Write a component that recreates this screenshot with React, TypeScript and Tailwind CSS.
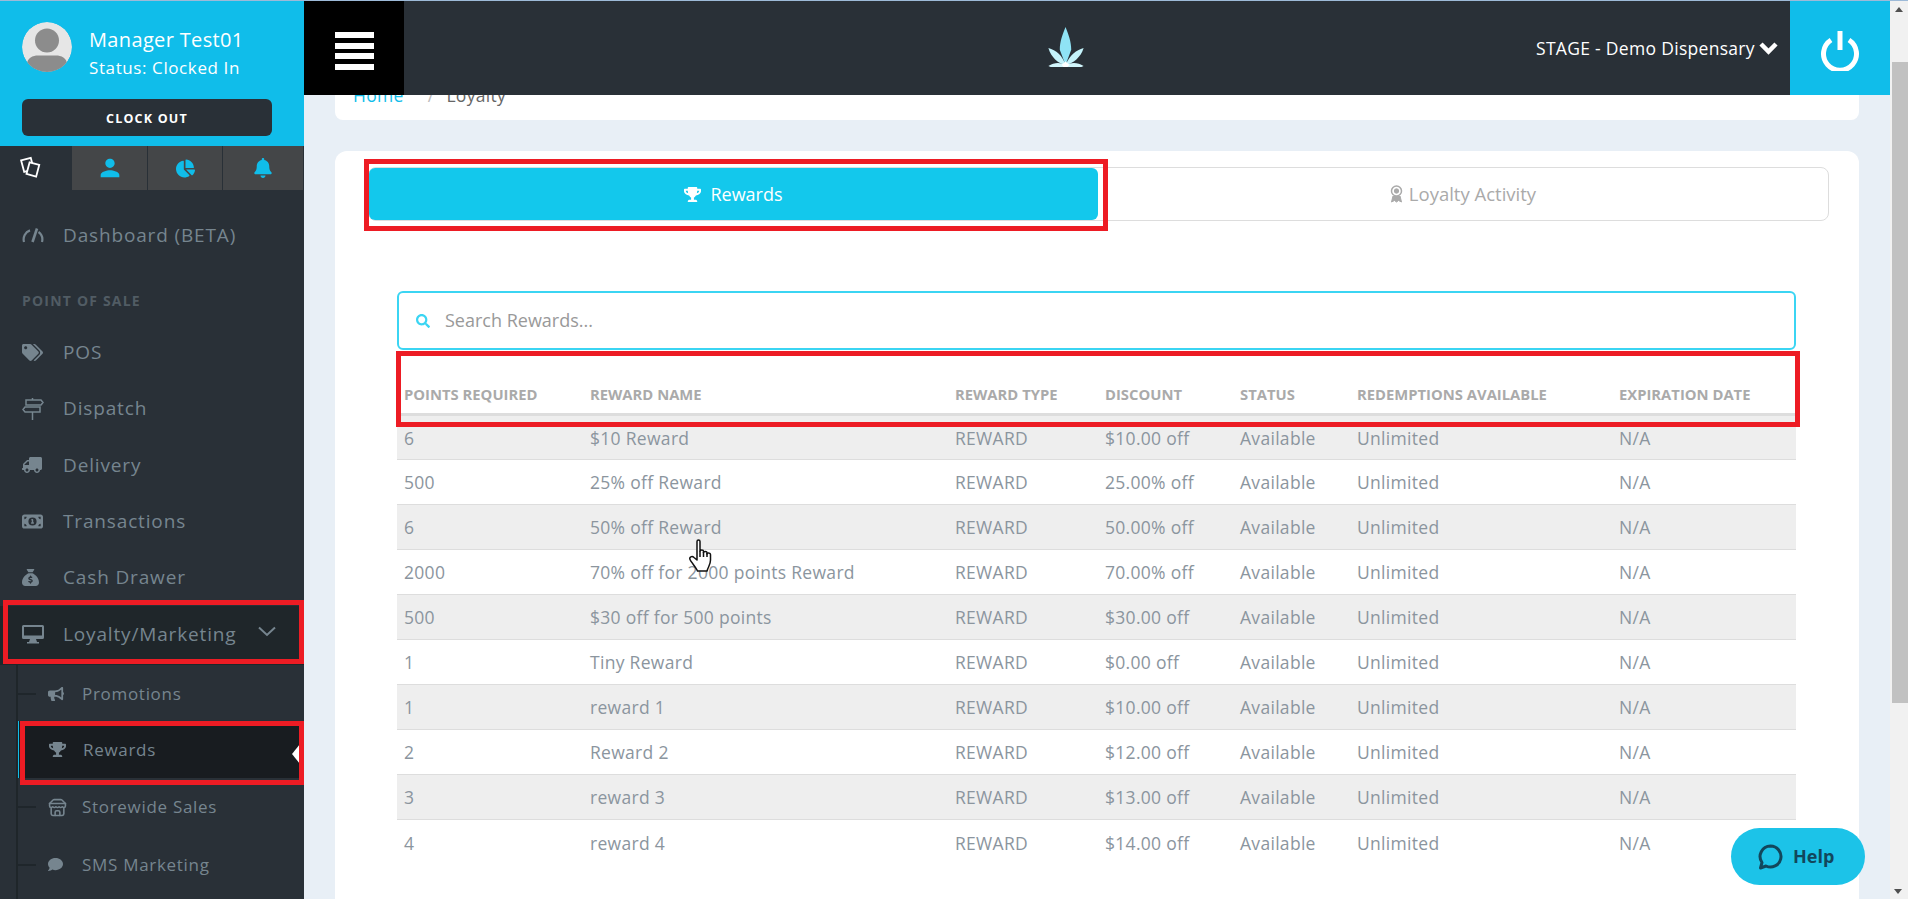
import { FaTags, FaTruck, FaBullhorn, FaTrophy, FaComment, FaChartPie, FaBell, FaSearch } from 'react-icons/fa';
import { LuStore } from 'react-icons/lu';
import { FaSackDollar, FaMoneyBill1 } from 'react-icons/fa6';
import { MdPerson } from 'react-icons/md';
import type { ReactNode } from 'react';

const rows = [
    ['6', '$10 Reward', '$10.00 off'],
    ['500', '25% off Reward', '25.00% off'],
    ['6', '50% off Reward', '50.00% off'],
    ['2000', '70% off for 2000 points Reward', '70.00% off'],
    ['500', '$30 off for 500 points', '$30.00 off'],
    ['1', 'Tiny Reward', '$0.00 off'],
    ['1', 'reward 1', '$10.00 off'],
    ['2', 'Reward 2', '$12.00 off'],
    ['3', 'reward 3', '$13.00 off'],
    ['4', 'reward 4', '$14.00 off'],
];

const heads = [
    { label: 'POINTS REQUIRED', w: 'w-[186px]' },
    { label: 'REWARD NAME', w: 'w-[365px]' },
    { label: 'REWARD TYPE', w: 'w-[150px]' },
    { label: 'DISCOUNT', w: 'w-[135px]' },
    { label: 'STATUS', w: 'w-[117px]' },
    { label: 'REDEMPTIONS AVAILABLE', w: 'w-[262px]' },
    { label: 'EXPIRATION DATE', w: 'w-[184px]' },
];

function NavItem({ icon, label }: { icon: ReactNode; label: string }) {
    return (
        <div className="flex h-[56.3px] items-center pl-[22px] text-[19px] tracking-[0.85px] text-[#76858f]">
            <span className="flex w-[41px] shrink-0 items-center text-[#76858f]">{icon}</span>
            {label}
        </div>
    );
}

function SubItem({ icon, label }: { icon: ReactNode; label: string }) {
    return (
        <div className="flex h-[57.5px] items-center text-[17px] tracking-[0.7px] text-[#76858f]">
            <span className="mr-[12px] h-[2px] w-[18px] shrink-0 bg-[#1f262b]" />
            <span className="flex w-[34px] shrink-0 items-center">{icon}</span>
            {label}
        </div>
    );
}

function Gauge() {
    return (
        <svg width="22" height="16" viewBox="0 0 22 16" fill="none" stroke="#76858f" strokeWidth="2.2">
            <path d="M2 15 A9.500 9.500 0 0 1 8 3.400" />
            <path d="M20 15 A9.500 9.500 0 0 0 16.500 5" />
            <path d="M10.500 15 L15 1.500" strokeWidth="2.6" />
        </svg>
    );
}

function Signpost() {
    return (
        <svg width="22" height="22" viewBox="0 0 22 22" fill="none" stroke="#76858f" strokeWidth="1.5">
            <path d="M4 2 H19 L21 4.500 L19 7 H4 Z" />
            <path d="M18 9 H3 L1 11.500 L3 14 H18 Z" />
            <path d="M10.500 14 V22" />
            <path d="M10.500 0 V2" />
        </svg>
    );
}

function Monitor() {
    return (
        <svg width="22" height="19" viewBox="0 0 22 19" fill="#76858f">
            <path fillRule="evenodd" d="M1.500 0 H20.500 A1.500 1.500 0 0 1 22 1.500 V12.500 A1.500 1.500 0 0 1 20.500 14 H1.500 A1.500 1.500 0 0 1 0 12.500 V1.500 A1.500 1.500 0 0 1 1.500 0 Z M2 2 V10.500 H20 V2 Z" />
            <path d="M8 14 H14 L15 17 H7 Z M5 17 H17 V18.500 H5 Z" />
        </svg>
    );
}

function Avatar() {
    return (
        <svg width="50" height="50" viewBox="0 0 50 50" className="shrink-0 rounded-full">
            <circle cx="25" cy="25" r="25" fill="#e6e6e6" />
            <circle cx="25" cy="18.500" r="12" fill="#8c8c8c" />
            <path d="M5 50 V42 C5 36 11 33.500 16 33.500 H34 C39 33.500 45 36 45 42 V50 Z" fill="#8c8c8c" />
        </svg>
    );
}

function Sidebar() {
    return (
        <aside className="relative flex h-full w-[304px] shrink-0 flex-col overflow-hidden bg-[#293037]">
            <div className="flex h-[145px] flex-col bg-[#10bdea] px-[22px] pt-[21px] text-white">
                <div className="flex items-start gap-[17px]">
                    <Avatar />
                    <div className="mt-[5px]">
                        <div className="whitespace-nowrap text-[20px] leading-[26px] tracking-[0.35px]">Manager Test01</div>
                        <div className="mt-[3px] whitespace-nowrap text-[17px] leading-[24px] tracking-[0.6px]">Status: Clocked In</div>
                    </div>
                </div>
                <button className="mt-[19px] flex h-[37px] w-[250px] items-center justify-center rounded-[6px] bg-[#293037] pt-[3px] text-[12.500px] font-bold tracking-[1.2px]">
                    CLOCK OUT
                </button>
            </div>
            <div className="flex h-[44px]">
                <div className="flex w-[72px] items-center justify-center">
                    <svg width="22" height="22" viewBox="0 0 22 22" fill="none" stroke="#fff" strokeWidth="1.8" className="-translate-x-[6px] -translate-y-[1px]">
                        <rect x="3.500" y="3" width="10" height="12" transform="rotate(-15 8 9)" />
                        <rect x="9" y="7.500" width="10" height="12" transform="rotate(15 14 13)" fill="#293037" />
                    </svg>
                </div>
                <div className="flex w-[75px] items-center justify-center bg-[#444648] text-[#10bdea]">
                    <MdPerson size={28} />
                </div>
                <div className="ml-px flex w-[74px] items-center justify-center bg-[#444648] text-[#10bdea]">
                    <FaChartPie size={19} />
                </div>
                <div className="ml-px flex w-[80px] items-center justify-center bg-[#444648] text-[#10bdea]">
                    <FaBell size={20} />
                </div>
            </div>
            <div className="mt-[17px]">
                <NavItem icon={<Gauge />} label="Dashboard (BETA)" />
            </div>
            <div className="flex h-[61px] items-end pb-[13px] pl-[22px] text-[14px] font-bold tracking-[1.2px] text-[#515c64]">
                POINT OF SALE
            </div>
            <NavItem icon={<FaTags size={21} />} label="POS" />
            <NavItem icon={<Signpost />} label="Dispatch" />
            <NavItem icon={<FaTruck size={20} className="-scale-x-100" />} label="Delivery" />
            <NavItem icon={<FaMoneyBill1 size={21} />} label="Transactions" />
            <NavItem icon={<FaSackDollar size={17} />} label="Cash Drawer" />
            <div className="flex h-[59px] items-center bg-[#1f262a] pb-[2px] pl-[22px] text-[19px] tracking-[0.85px] text-[#76858f]">
                <span className="flex w-[41px] shrink-0 items-center"><Monitor /></span>
                Loyalty/Marketing
                <svg width="18" height="11" viewBox="0 0 18 11" fill="none" stroke="#76858f" strokeWidth="2" className="ml-auto mr-[28px] -translate-y-[3px]">
                    <path d="M1 1.500 L9 9 L17 1.500" />
                </svg>
            </div>
            <div className="ml-[16px] flex-1 border-l-2 border-[#1f262a]">
                <SubItem icon={<FaBullhorn size={16} />} label="Promotions" />
                <div className="-mt-[1px] flex h-[57px] items-center border-l border-[#10bdea] bg-[#181c20] pl-[30px] text-[17px] tracking-[0.7px] text-[#76858f]">
                    <span className="flex w-[34px] shrink-0 items-center"><FaTrophy size={17} /></span>
                    Rewards
                </div>
                <SubItem icon={<LuStore size={19} />} label="Storewide Sales" />
                <SubItem icon={<FaComment size={15} />} label="SMS Marketing" />
            </div>
            {/* triangle marker on active item */}
            <div className="absolute left-[292px] top-[743px] h-0 w-0 border-y-[10px] border-r-[8px] border-y-transparent border-r-white" />
            {/* red annotation boxes */}
            <div className="absolute left-[3px] top-[599px] h-[64px] w-[301px] border-[5px] border-[#ed1c24]" />
            <div className="absolute left-[20px] top-[720px] h-[64px] w-[284px] border-[5px] border-[#ed1c24]" />
        </aside>
    );
}

function Logo() {
    return (
        <svg width="38" height="40" viewBox="7 2 37 42" className="-translate-y-[1px]">
            <path d="M25 2 C28 10 31 17 31 26 L25 42 L19 26 C19 17 22 10 25 2 Z" fill="#8fe3f5" />
            <path d="M7 24 C15 26 22 32 25 42 C17 40 10 34 7 24 Z" fill="#c4f3fb" />
            <path d="M44 24 C36 26 29 32 25 42 C33 40 41 34 44 24 Z" fill="#c4f3fb" />
            <path d="M7 43 C13 39 20 39 25 42 C31 39 38 39 44 43 C38 46 31 46 25 43.500 C20 46 13 46 7 43 Z" fill="#d2f6fc" />
            <path d="M25 38 L29 42 L25 46 L21 42 Z" fill="#ffffff" />
        </svg>
    );
}

function Header() {
    return (
        <header className="flex h-[94px] shrink-0 items-center bg-[#293037]">
            <div className="flex h-full w-[100px] shrink-0 flex-col items-center justify-center gap-[4.500px] bg-black pt-[6px]">
                <span className="h-[6px] w-[39px] bg-white" />
                <span className="h-[6px] w-[39px] bg-white" />
                <span className="h-[6px] w-[39px] bg-white" />
                <span className="h-[6px] w-[39px] bg-white" />
            </div>
            <div className="flex flex-1 items-center">
                <div className="ml-[643px] w-[38px]">
                    <Logo />
                </div>
                <div className="ml-[451px] flex items-center whitespace-nowrap text-[17.500px] tracking-[0.3px] text-white">
                    STAGE - Demo Dispensary
                    <svg width="19" height="14" viewBox="0 0 19 14" fill="none" stroke="#fff" strokeWidth="4.500" className="ml-[4px]">
                        <path d="M2 3 L9.500 10.500 L17 3" />
                    </svg>
                </div>
            </div>
            <div className="flex h-full w-[100px] shrink-0 items-center justify-center bg-[#10bdea] pt-[6px]">
                <svg width="42" height="40" viewBox="0 0 42 40" fill="none" stroke="#fff" strokeWidth="5">
                    <path d="M12 9 A16.500 16.500 0 1 0 30 9" />
                    <path d="M21 0 V19" />
                </svg>
            </div>
        </header>
    );
}

function Ribbon() {
    return (
        <svg width="13" height="18" viewBox="0 0 13 18" fill="none" stroke="#aaaaaa">
            <circle cx="6.500" cy="6" r="5" strokeWidth="1.500" />
            <circle cx="6.500" cy="6" r="2.200" fill="#aaaaaa" />
            <path d="M3 11 L1.500 17 L4.500 15.500 L6.500 17 L8.500 15.500 L11.500 17 L10 11" fill="#aaaaaa" strokeWidth="1" />
        </svg>
    );
}

function HandCursor() {
    return (
        <svg width="28" height="33" viewBox="0 0 28 33" fill="#ffffff" stroke="#111111" strokeWidth="1.500" strokeLinejoin="round" className="absolute left-[689px] top-[539px]">
            <path d="M8 2.500 C8 0.500 11 0.500 11 2.500 V12 C11 10.500 14.500 10.500 14.500 12 V13.500 C14.500 12 18 12 18 13.500 V15 C18 13.500 21.500 13.500 21.500 15.500 V21 C21.500 26 19 28 18 32 H8.500 C7.500 29 2 23 1 20.500 C0 18 3 16.500 5 18.500 L8 21 Z" />
            <path d="M11 12 V18 M14.500 13 V18 M18 14 V18" fill="none" />
        </svg>
    );
}

export default function App() {
    return (
        <div className="relative flex h-screen w-full flex-col overflow-hidden bg-[#e8eff6] font-['Open_Sans',sans-serif]">
            <div className="h-px shrink-0 bg-[#9dbad8]" />
            <div className="flex min-h-0 flex-1">
                <Sidebar />
                <div className="flex min-w-0 flex-1 flex-col">
                    <Header />
                    <main className="min-h-0 flex-1 overflow-hidden pl-[31px] pr-[31px]">
                        <div className="flex h-[25px] items-start overflow-hidden rounded-b-lg bg-white pl-[18px] text-[17.500px] leading-[20px] tracking-[0.3px]">
                            <div className="-mt-[10px] flex">
                                <span className="text-[#10bdea]">Home</span>
                                <span className="ml-[24px] text-[#bbb]">/</span>
                                <span className="ml-[12px] text-[#666]">Loyalty</span>
                            </div>
                        </div>
                        <section className="relative mt-[31px] h-[800px] rounded-t-xl bg-white px-[33px] pt-[16px]">
                            <div className="flex h-[54px] w-[1461px] rounded-lg border border-[#dddddd]">
                                <div className="flex h-full w-[729px] items-center justify-center gap-[9px] rounded-md bg-[#13c8ec] text-[18px] text-white">
                                    <FaTrophy size={17} />
                                    Rewards
                                </div>
                                <div className="flex flex-1 items-center justify-center gap-[6px] text-[18.500px] text-[#aaaaaa]">
                                    <Ribbon />
                                    Loyalty Activity
                                </div>
                            </div>
                            <div className="ml-[29px] mt-[70px] w-[1399px]">
                                <div className="flex h-[59px] items-center gap-[15px] rounded-md border-2 border-[#3bd5f3] pl-[17px] text-[18px] text-[#999999]">
                                    <FaSearch size={14} className="text-[#3bd5f3]" />
                                    Search Rewards...
                                </div>
                                <table className="mt-[1px] w-full table-fixed border-collapse text-left">
                                    <thead>
                                        <tr className="h-[63px] border-b-[3px] border-[#dddddd]">
                                            {heads.map(h => (
                                                <th key={h.label} className={`${h.w} pl-[7px] pt-[24px] text-[14.800px] font-bold whitespace-nowrap text-[#aaaaaa]`}>
                                                    {h.label}
                                                </th>
                                            ))}
                                        </tr>
                                    </thead>
                                    <tbody>
                                        {rows.map((r, i) => (
                                            <tr key={i} className={`h-[45px] border-b border-[#dddddd] text-[17.500px] tracking-[0.3px] text-[#8b959e] last:border-b-0 ${i % 2 === 0 ? 'bg-[#eeeeee]' : 'bg-white'}`}>
                                                <td className="pl-[7px] pt-[2px]">{r[0]}</td>
                                                <td className="pl-[7px] pt-[2px]">{r[1]}</td>
                                                <td className="pl-[7px] pt-[2px]">REWARD</td>
                                                <td className="pl-[7px] pt-[2px]">{r[2]}</td>
                                                <td className="pl-[7px] pt-[2px]">Available</td>
                                                <td className="pl-[7px] pt-[2px]">Unlimited</td>
                                                <td className="pl-[7px] pt-[2px]">N/A</td>
                                            </tr>
                                        ))}
                                    </tbody>
                                </table>
                            </div>
                            {/* red annotation boxes */}
                            <div className="absolute left-[29px] top-[8px] h-[72px] w-[744px] border-[5px] border-[#ed1c24]" />
                            <div className="absolute left-[61px] top-[200px] h-[76px] w-[1404px] border-[5px] border-[#ed1c24]" />
                        </section>
                    </main>
                </div>
                <div className="relative w-[18px] shrink-0 bg-[#f1f1f1]">
                    <div className="flex h-[17px] items-center justify-center">
                        <span className="h-0 w-0 border-x-[4px] border-b-[5px] border-x-transparent border-b-[#505050]" />
                    </div>
                    <div className="ml-[2px] mt-[44px] h-[641px] bg-[#c1c1c1]" />
                    <div className="absolute bottom-[5px] left-[4px] h-0 w-0 border-x-[4px] border-t-[5px] border-x-transparent border-t-[#505050]" />
                </div>
            </div>
            <div className="absolute left-[1731px] top-[828px] flex h-[57px] w-[134px] items-center gap-[10px] rounded-full bg-[#1cc3e8] pl-[27px] text-[18px] font-bold text-[#12475c]">
                <svg width="25" height="26" viewBox="0 0 25 26" fill="none" stroke="#12475c" strokeWidth="3">
                    <path d="M12.500 2 A10.500 10.500 0 1 1 8 22 L2.500 24 L4 18.500 A10.500 10.500 0 0 1 12.500 2 Z" strokeLinejoin="round" />
                </svg>
                Help
            </div>
            <HandCursor />
        </div>
    );
}
